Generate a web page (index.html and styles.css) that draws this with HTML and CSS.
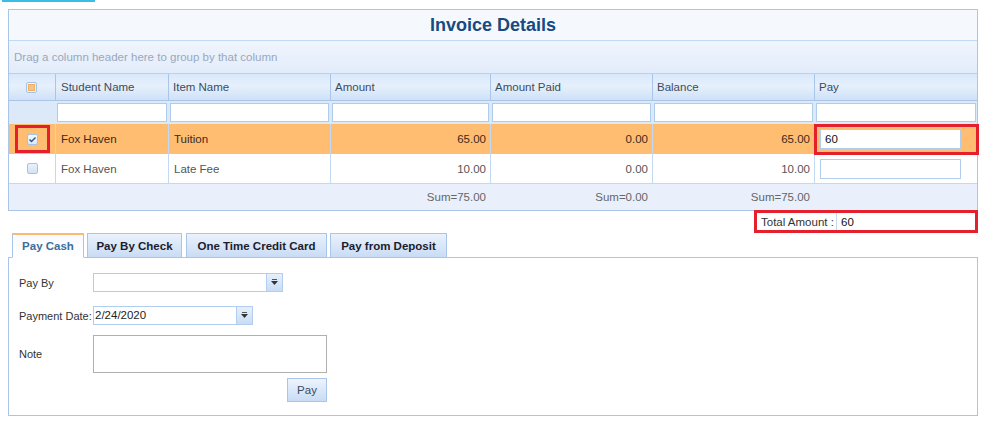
FILE: index.html
```html
<!DOCTYPE html>
<html>
<head>
<meta charset="utf-8">
<link rel="stylesheet" href="styles.css">
</head>
<body>
<div class="topbar"></div>
<div class="grid">
  <div class="title">Invoice Details</div>
  <div class="group">Drag a column header here to group by that column</div>
  <div class="row hdr">
    <div class="cell center"><span class="cb cb-part"><span class="cb-fill"></span></span></div>
    <div class="cell">Student Name</div>
    <div class="cell">Item Name</div>
    <div class="cell">Amount</div>
    <div class="cell">Amount Paid</div>
    <div class="cell">Balance</div>
    <div class="cell">Pay</div>
  </div>
  <div class="row filter">
    <div class="fcell"></div>
    <div class="fcell"><div class="fin"></div></div>
    <div class="fcell"><div class="fin"></div></div>
    <div class="fcell"><div class="fin"></div></div>
    <div class="fcell"><div class="fin"></div></div>
    <div class="fcell"><div class="fin"></div></div>
    <div class="fcell"><div class="fin"></div></div>
  </div>
  <div class="row data sel">
    <div class="cell center mark">
      <span class="cb cb-on"><svg width="9" height="9" viewBox="0 0 9 9"><polyline points="1.5,4.5 3.5,6.5 7.5,2.5" fill="none" stroke="#2b5283" stroke-width="1.4"/></svg></span>
      <span class="redbox redbox-cb"></span>
    </div>
    <div class="cell">Fox Haven</div>
    <div class="cell">Tuition</div>
    <div class="cell num">65.00</div>
    <div class="cell num">0.00</div>
    <div class="cell num">65.00</div>
    <div class="cell paycell mark"><div class="payin">60</div><span class="redbox redbox-pay"></span></div>
  </div>
  <div class="row data row2">
    <div class="cell center"><span class="cb cb-off"></span></div>
    <div class="cell">Fox Haven</div>
    <div class="cell">Late Fee</div>
    <div class="cell num">10.00</div>
    <div class="cell num">0.00</div>
    <div class="cell num">10.00</div>
    <div class="cell paycell"><div class="payin"></div></div>
  </div>
  <div class="row foot">
    <div class="tcell"></div>
    <div class="tcell"></div>
    <div class="tcell"></div>
    <div class="tcell num">Sum=75.00</div>
    <div class="tcell num">Sum=0.00</div>
    <div class="tcell num">Sum=75.00</div>
    <div class="tcell"></div>
  </div>
</div>
<div class="totalwrap">
  <div class="total">
    <span class="tlabel">Total Amount :</span>
    <span class="tval">60</span>
  </div>
</div>
<div class="tabs">
  <div class="tab active w1">Pay Cash</div>
  <div class="tab w2">Pay By Check</div>
  <div class="tab w3">One Time Credit Card</div>
  <div class="tab w4">Pay from Deposit</div>
</div>
<div class="panel">
  <div class="frow r1">
    <div class="flabel">Pay By</div>
    <div class="combo wide"><div class="val"></div><div class="dd"><svg width="9" height="7" viewBox="0 0 9 7"><rect x="2" y="0" width="5" height="1" fill="#555"/><polygon points="1,2 8,2 4.5,6" fill="#333"/></svg></div></div>
  </div>
  <div class="frow r2">
    <div class="flabel">Payment Date:</div>
    <div class="combo narrow"><div class="val">2/24/2020</div><div class="dd"><svg width="9" height="7" viewBox="0 0 9 7"><rect x="2" y="0" width="5" height="1" fill="#555"/><polygon points="1,2 8,2 4.5,6" fill="#333"/></svg></div></div>
  </div>
  <div class="frow r3">
    <div class="flabel">Note</div>
    <div class="note"></div>
  </div>
  <div class="frow r4">
    <div class="paybtn">Pay</div>
  </div>
</div>
</body>
</html>
```
FILE: styles.css
```css
body {
  margin: 0;
  font-family: "Liberation Sans", Arial, sans-serif;
  font-size: 11.5px;
  color: #333;
  background: #fff;
}
.topbar {
  width: 93px;
  height: 2px;
  margin-left: 2px;
  background: #3cbde5;
}
.grid {
  margin: 7px 0 0 8px;
  width: 970px;
  border: 1px solid #a9c6ea;
  box-sizing: border-box;
}
.title {
  height: 31px;
  box-sizing: border-box;
  border-bottom: 1px solid #c3d8f3;
  background: #f5f9fe;
  text-align: center;
  font-weight: bold;
  font-size: 18px;
  line-height: 30px;
  color: #174a82;
}
.group {
  height: 33px;
  box-sizing: border-box;
  border-bottom: 1px solid #b6d0f0;
  background: linear-gradient(#f0f5fd, #e2ecfa);
  color: #9aa8bb;
  padding-left: 5px;
  line-height: 32px;
}
.row {
  display: grid;
  grid-template-columns: 46px 113px 162px 160px 162px 162px 163px;
}
.cell {
  box-sizing: border-box;
  border-left: 1px solid #c2d8f3;
  padding: 0 5px;
  display: flex;
  align-items: center;
  white-space: nowrap;
}
.cell:first-child { border-left: none; }
.center { justify-content: center; }
.num { justify-content: flex-end; padding-right: 4px; }
.hdr {
  height: 27px;
  box-sizing: border-box;
  border-bottom: 1px solid #a9c6ea;
  background: linear-gradient(#d9e8fa, #e6f0fc 45%, #cfe1f7);
  color: #3d4b5d;
}
.hdr .cell { border-left-color: #a9c6ea; padding-left: 4px; }
.hdr .cell:nth-child(2) { padding-left: 5px; }
.filter {
  height: 23px;
  background: #dce9f9;
}
.fcell {
  padding: 2px 1px 1px 2px;
  box-sizing: border-box;
}
.fin {
  height: 19px;
  background: #fff;
  border: 1px solid #b0cced;
  box-sizing: border-box;
}
.data { height: 30px; color: #444; }
.row2 { height: 29px; color: #555; }
.sel { background: #ffbd72; color: #3a2a1c; }
.mark { position: relative; }
.cb {
  width: 11px;
  height: 11px;
  box-sizing: border-box;
  border: 1px solid #a5c3e8;
  border-radius: 2px;
  display: flex;
  align-items: center;
  justify-content: center;
}
.cb-part { background: #eef4fc; padding: 1px; }
.cb-fill { display: block; width: 7px; height: 7px; background: #fbc27c; border: 1px solid #f2b064; box-sizing: border-box; }
.cb-on { background: linear-gradient(#f3f8fe, #dce9f9); }
.cb-off { background: linear-gradient(#e9f1fc, #d3e3f7); }
.redbox {
  position: absolute;
  border: 3px solid #e3202b;
  box-sizing: border-box;
}
.redbox-cb { left: 6px; top: 1px; width: 35px; height: 28px; }
.redbox-pay { left: -1px; top: 0; width: 165px; height: 31px; }
.paycell { padding-left: 5px; }
.payin {
  width: 141px;
  height: 20px;
  box-sizing: border-box;
  border: 1px solid #b3cdee;
  background: #fff;
  padding-left: 4px;
  line-height: 18px;
  color: #111;
}
.foot {
  height: 27px;
  box-sizing: border-box;
  border-top: 1px solid #c3d8f3;
  background: #e9f0fb;
  color: #666;
}
.tcell { display: flex; align-items: center; padding-right: 4px; }
.totalwrap {
  width: 970px;
  margin: -1px 0 0 8px;
  display: flex;
  justify-content: flex-end;
}
.total {
  width: 224px;
  height: 23px;
  box-sizing: border-box;
  border: 3px solid #e3202b;
  display: flex;
  align-items: center;
  color: #333;
}
.tlabel {
  padding-left: 4px;
  width: 75px;
  height: 100%;
  display: flex;
  align-items: center;
  white-space: nowrap;
  border-right: 1px solid #c8d8ec;
}
.tval { padding-left: 4px; color: #111; }
.tabs {
  display: flex;
  margin: 0 0 0 12px;
  height: 25px;
  position: relative;
  z-index: 1;
  margin-bottom: -1px;
}
.tab {
  box-sizing: border-box;
  height: 25px;
  margin-right: 3px;
  border: 1px solid #a9c6ea;
  background: linear-gradient(#eaf2fc, #c9dcf5);
  font-weight: bold;
  color: #1c1c2c;
  display: flex;
  align-items: center;
  justify-content: center;
  white-space: nowrap;
}
.tab.active {
  border-top: 2px solid #f7bb72;
  border-bottom-color: #fff;
  background: linear-gradient(#f7fafe, #ffffff);
  color: #3e6d9c;
}
.w1 { width: 72px; }
.w2 { width: 95px; margin-right: 4px; }
.w3 { width: 141px; }
.w4 { width: 117px; }
.panel {
  margin-left: 8px;
  width: 970px;
  height: 159px;
  box-sizing: border-box;
  border: 1px solid #a9c6ea;
  padding: 15px 0 0 10px;
}
.frow { display: flex; align-items: center; }
.r2 { margin-top: 14px; }
.r3 { margin-top: 10px; }
.r4 { margin-top: 5px; padding-left: 268px; }
.flabel { width: 74px; flex-shrink: 0; font-size: 11px; color: #333; white-space: nowrap; }
.combo {
  display: flex;
  height: 19px;
  box-sizing: border-box;
  border: 1px solid #b3cdee;
  background: #fff;
}
.wide { width: 190px; }
.narrow { width: 160px; }
.val { flex: 1; padding-left: 1px; line-height: 17px; color: #222; }
.dd {
  width: 15px;
  border-left: 1px solid #b3cdee;
  background: linear-gradient(#e6f0fc, #c8dcf5);
  display: flex;
  align-items: center;
  justify-content: center;
}
.note {
  width: 234px;
  height: 38px;
  box-sizing: border-box;
  border: 1px solid #b0b0b0;
  background: #fff;
}
.paybtn {
  width: 40px;
  height: 24px;
  box-sizing: border-box;
  border: 1px solid #a9c6ea;
  background: linear-gradient(#edf4fd, #c9dcf5);
  color: #3d4b5d;
  display: flex;
  align-items: center;
  justify-content: center;
}
```
